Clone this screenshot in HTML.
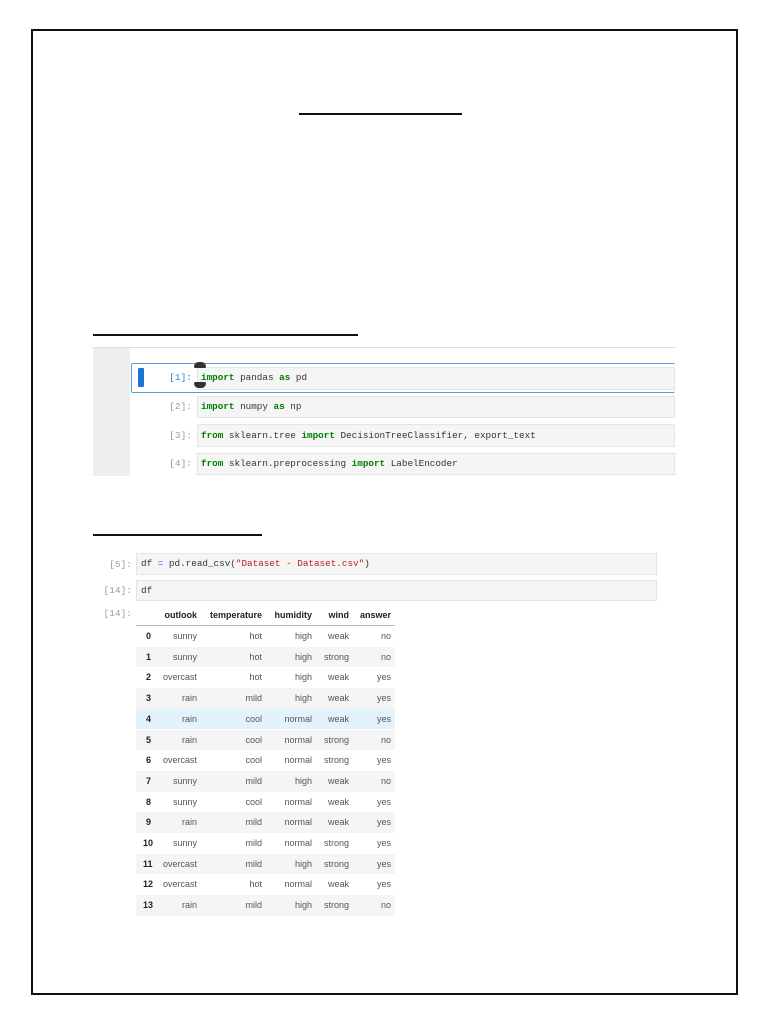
<!DOCTYPE html>
<html><head><meta charset="utf-8"><style>
*{margin:0;padding:0;box-sizing:border-box}
body{width:768px;height:1024px;background:#fff;position:relative;font-family:"Liberation Sans",sans-serif;overflow:hidden}
.abs{position:absolute}
.frame{left:31px;top:29px;width:707px;height:966px;border:2px solid #111}
.hl{height:2px;background:#111}
.mono{font-family:"Liberation Mono",monospace;font-size:9.3px;color:#333;white-space:pre}
.k{color:#008000;font-weight:bold}
.s{color:#ba2121}
.p{color:#aa22ff}
.pr{color:#9a9a9a;font-family:"Liberation Mono",monospace;font-size:9.5px;text-align:right}
.inp{background:#f5f5f5;border:1px solid #e4e4e4}
.row{position:absolute;left:136px;width:259px;height:20.7px;font-size:9px;color:#555}
.row span{position:absolute;top:5px}
.g{background:#f5f5f5}.b{background:#e3f3fb}
</style></head><body>
<div class="abs frame"></div>
<div class="abs hl" style="left:299px;top:113px;width:163px"></div>
<div class="abs hl" style="left:93px;top:334px;width:265px;height:1.5px"></div>
<div class="abs hl" style="left:93px;top:534px;width:169px;height:1.5px"></div>

<div class="abs" style="left:93px;top:347px;width:582px;height:129px;background:#fff"></div>
<div class="abs" style="left:93px;top:347px;width:37px;height:129px;background:#eee"></div>
<div class="abs" style="left:93px;top:347px;width:582px;height:1px;background:#e0e0e0"></div>
<div class="abs" style="left:131px;top:363px;width:544px;height:30px;border:1px solid #5c9ad8;border-right:none;border-radius:2px"></div>
<div class="abs" style="left:138px;top:368px;width:6px;height:19px;background:#1976d2;border-radius:1px"></div>

<div class="abs inp" style="left:197px;top:367px;width:478px;height:23px"></div>
<div class="abs inp" style="left:197px;top:396px;width:478px;height:22px"></div>
<div class="abs inp" style="left:197px;top:424px;width:478px;height:23px"></div>
<div class="abs inp" style="left:197px;top:453px;width:478px;height:22px"></div>
<div class="abs" style="left:194px;top:362px;width:12px;height:6px;background:#333;border-radius:6px 6px 2px 2px"></div>
<div class="abs" style="left:194px;top:382px;width:12px;height:6px;background:#333;border-radius:2px 2px 6px 6px"></div>
<div class="abs pr" style="left:150px;top:372px;width:42px;color:#307fc1">[1]:</div>
<div class="abs pr" style="left:150px;top:401px;width:42px">[2]:</div>
<div class="abs pr" style="left:150px;top:430px;width:42px">[3]:</div>
<div class="abs pr" style="left:150px;top:458px;width:42px">[4]:</div>
<div class="abs mono" style="left:201px;top:372px"><span class="k">import</span> pandas <span class="k">as</span> pd</div>
<div class="abs mono" style="left:201px;top:401px"><span class="k">import</span> numpy <span class="k">as</span> np</div>
<div class="abs mono" style="left:201px;top:430px"><span class="k">from</span> sklearn.tree <span class="k">import</span> DecisionTreeClassifier, export_text</div>
<div class="abs mono" style="left:201px;top:458px"><span class="k">from</span> sklearn.preprocessing <span class="k">import</span> LabelEncoder</div>

<div class="abs inp" style="left:136px;top:553px;width:521px;height:22px"></div>
<div class="abs inp" style="left:136px;top:580px;width:521px;height:21px"></div>
<div class="abs pr" style="left:90px;top:559px;width:42px">[5]:</div>
<div class="abs pr" style="left:90px;top:585px;width:42px">[14]:</div>
<div class="abs pr" style="left:90px;top:608px;width:42px">[14]:</div>
<div class="abs mono" style="left:141px;top:558px">df <span class="p">=</span> pd.read_csv(<span class="s">"Dataset - Dataset.csv"</span>)</div>
<div class="abs mono" style="left:141px;top:585px">df</div>

<div class="row" style="top:605px;font-weight:bold;color:#222;border-bottom:1px solid #bbb;height:21px">
<span style="right:198px">outlook</span><span style="right:133px">temperature</span><span style="right:83px">humidity</span><span style="right:46px">wind</span><span style="right:4px">answer</span></div>
<div id="rows"></div>
<script>
var d=[["sunny","hot","high","weak","no"],["sunny","hot","high","strong","no"],["overcast","hot","high","weak","yes"],["rain","mild","high","weak","yes"],["rain","cool","normal","weak","yes"],["rain","cool","normal","strong","no"],["overcast","cool","normal","strong","yes"],["sunny","mild","high","weak","no"],["sunny","cool","normal","weak","yes"],["rain","mild","normal","weak","yes"],["sunny","mild","normal","strong","yes"],["overcast","mild","high","strong","yes"],["overcast","hot","normal","weak","yes"],["rain","mild","high","strong","no"]];
var h="";
d.forEach(function(r,i){var c=i==4?"b":(i%2?"g":"");
h+='<div class="row '+c+'" style="top:'+(626+i*20.7)+'px"><span style="left:'+(i>9?7:10)+'px;font-weight:bold;color:#222">'+i+'</span><span style="right:198px">'+r[0]+'</span><span style="right:133px">'+r[1]+'</span><span style="right:83px">'+r[2]+'</span><span style="right:46px">'+r[3]+'</span><span style="right:4px">'+r[4]+'</span></div>';});
document.getElementById("rows").innerHTML=h;
</script>
</body></html>
